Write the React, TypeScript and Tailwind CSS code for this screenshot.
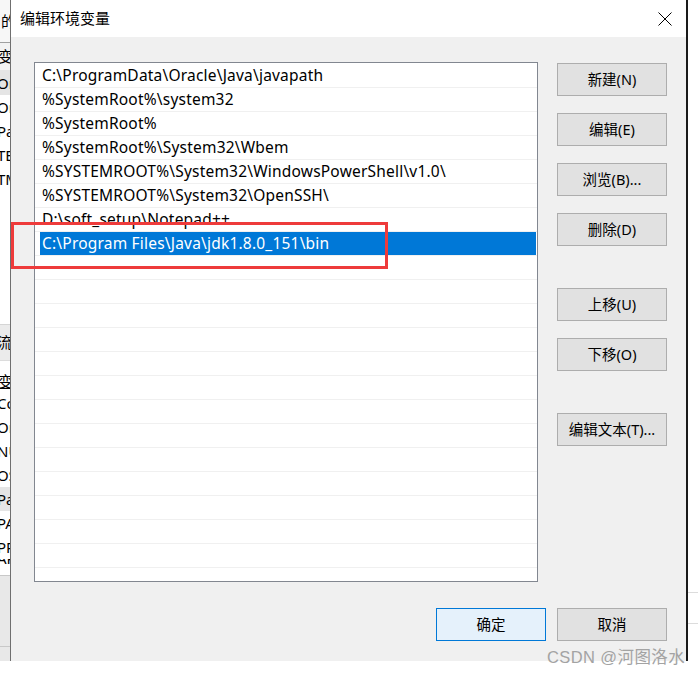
import React from "react";

const font = { fontFamily: '"Noto Sans", "Noto Sans CJK SC", sans-serif' };

const paths = [
  "C:\\ProgramData\\Oracle\\Java\\javapath",
  "%SystemRoot%\\system32",
  "%SystemRoot%",
  "%SystemRoot%\\System32\\Wbem",
  "%SYSTEMROOT%\\System32\\WindowsPowerShell\\v1.0\\",
  "%SYSTEMROOT%\\System32\\OpenSSH\\",
  "D:\\soft_setup\\Notepad++",
  "C:\\Program Files\\Java\\jdk1.8.0_151\\bin",
];

function Btn({ label, primary }: { label: string; primary?: boolean }) {
  return (
    <div
      className={
        "w-[110px] h-[33px] flex items-center justify-center text-[14.5px] text-black border " +
        (primary ? "bg-[#e5f1fb] border-[#0078d7]" : "bg-[#e1e1e1] border-[#adadad]")
      }
    >
      {label}
    </div>
  );
}

function LeftStrip() {
  const rowsTop = ["Or", "Or", "Pa", "TE", "TM"];
  const rowsBottom = ["Co", "Or", "NU", "OS", "Pa", "PA", "PR"];
  return (
    <div className="w-[10px] h-full overflow-hidden bg-[#f0f0f0] flex flex-col text-[15px] text-black leading-none whitespace-nowrap">
      <div className="h-[42px] bg-[#f7f7f7] flex items-center">
        <span className="ml-[1px]">的</span>
      </div>
      <div className="h-[1px] bg-[#a0a0a0]" />
      <div className="h-[187px] bg-white flex flex-col">
        <div className="h-[28px] flex items-center bg-[#f3f3f3] border-b border-[#e5e5e5]">
          <span className="-ml-[2px]">变量</span>
        </div>
        {rowsTop.map((t, i) => (
          <div
            key={i}
            className={"h-[24px] flex items-center " + (i === 0 ? "bg-[#e5e5e5]" : "")}
          >
            <span className="-ml-[3px]">{t}</span>
          </div>
        ))}
      </div>
      <div className="h-[95px] bg-white border-b border-[#d5d5d5]" />
      <div className="h-[250px] bg-white flex flex-col">
        <div className="h-[36px] flex items-center bg-[#ebebeb] border-b border-[#dcdcdc]">
          <span className="-ml-[3px]">流</span>
        </div>
        <div className="h-[30px] flex items-end pb-[2px]">
          <span className="-ml-[2px] underline">变量</span>
        </div>
        {rowsBottom.map((t, i) => (
          <div
            key={i}
            className={"h-[24px] flex items-center " + (i === 4 ? "bg-[#e5e5e5]" : "")}
          >
            <span className="-ml-[3px]">{t}</span>
          </div>
        ))}
        <div className="h-[16px] flex items-start overflow-hidden">
          <span className="-ml-[3px] -mt-[8px]">AP</span>
        </div>
      </div>
      <div className="h-[1px] bg-[#c8c8c8]" />
      <div className="flex-1 bg-[#e8e8e8] flex flex-col">
        <div className="h-[70px]" />
        <div className="h-[1px] bg-[#c8c8c8]" />
      </div>
    </div>
  );
}

export default function App() {
  const emptyRows = Array.from({ length: 14 });
  return (
    <div className="w-[698px] h-[675px] bg-white relative overflow-hidden" style={font}>
      <div className="flex h-[661px]">
        <LeftStrip />
        <div className="w-[1px] bg-[#6f6f6f]" />
        {/* Dialog */}
        <div className="w-[675px] h-full flex flex-col relative">
          <div className="h-[37px] bg-white flex items-center justify-between">
            <span className="ml-[9px] text-[15px] text-black">编辑环境变量</span>
            <svg width="14" height="14" viewBox="0 0 14 14" className="mr-[14px]">
              <path d="M0.5 0.5 L13.5 13.5 M13.5 0.5 L0.5 13.5" stroke="#000" strokeWidth="1" />
            </svg>
          </div>
          <div className="flex-1 bg-[#f0f0f0] flex flex-col">
            <div className="flex pt-[25px] pl-[23px]">
              <div className="w-[504px] h-[520px] bg-white border border-[#828790] pt-[1px] overflow-hidden">
                {paths.map((p, i) => (
                  <div key={i} className="h-[24px] border-b border-[#f0f0f0] flex">
                    <div
                      className={
                        "ml-[5px] w-[496px] h-[23px] flex items-center pl-[2px] text-[15.5px] tracking-[0.2px] whitespace-nowrap " +
                        (i === 7 ? "bg-[#0078d7] text-white" : "text-black")
                      }
                    >
                      {p}
                    </div>
                  </div>
                ))}
                {emptyRows.map((_, i) => (
                  <div key={"e" + i} className="h-[24px] border-b border-[#f0f0f0]" />
                ))}
              </div>
              <div className="ml-[19px] pt-[1px] flex flex-col">
                <div className="flex flex-col gap-[17px]">
                  <Btn label="新建(N)" />
                  <Btn label="编辑(E)" />
                  <Btn label="浏览(B)..." />
                  <Btn label="删除(D)" />
                </div>
                <div className="mt-[42px] flex flex-col gap-[17px]">
                  <Btn label="上移(U)" />
                  <Btn label="下移(O)" />
                </div>
                <div className="mt-[42px]">
                  <Btn label="编辑文本(T)..." />
                </div>
              </div>
            </div>
            <div className="flex justify-end gap-[11px] pr-[19px] pt-[26px]">
              <Btn label="确定" primary />
              <Btn label="取消" />
            </div>
          </div>
          {/* red highlight annotation */}
          <div className="absolute left-0 top-[222px] w-[377px] h-[47px] border-[3px] border-[#ee3b3b]" />
        </div>
        <div className="w-[2px] bg-[#1a1a1a]" />
        <div className="flex-1 bg-white flex flex-col">
          <div className="h-[592px]" />
          <div className="h-[1px] bg-[#dcdcdc]" />
          <div className="h-[30px]" />
          <div className="h-[1px] bg-[#dcdcdc]" />
        </div>
      </div>
      <div
        className="absolute left-[547px] top-[649px] text-[16.5px] tracking-[0.4px] text-[#a3a3a3] whitespace-nowrap leading-none"
        style={{ fontFamily: '"Liberation Sans", "Noto Sans CJK SC", sans-serif' }}
      >
        CSDN @河图洛水
      </div>
    </div>
  );
}
